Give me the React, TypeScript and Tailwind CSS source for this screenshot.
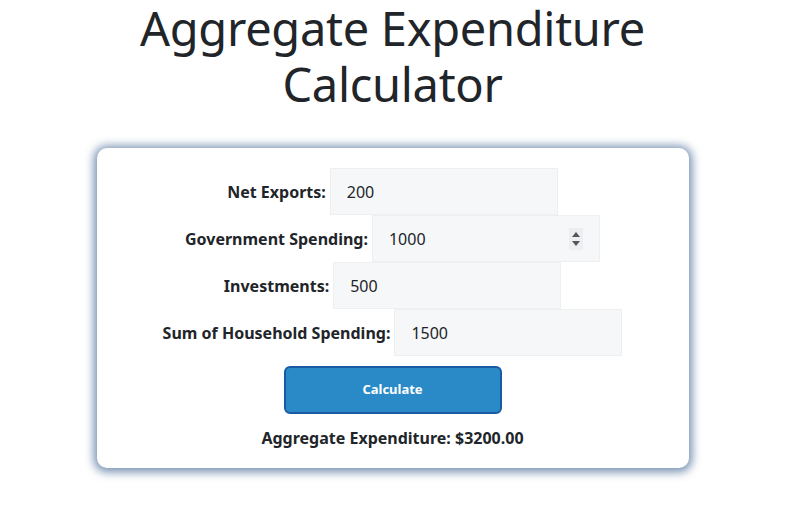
import React from "react";

const fields = [
  { label: "Net Exports:", value: "200" },
  { label: "Government Spending:", value: "1000", spinner: true },
  { label: "Investments:", value: "500" },
  { label: "Sum of Household Spending:", value: "1500" },
];

function Spinner() {
  return (
    <div className="absolute right-[16px] top-1/2 -translate-y-1/2 flex h-[22px] w-[14px] flex-col items-center justify-center gap-[4px] bg-[#eceef1]">
      <svg width="8" height="5" viewBox="0 0 8 5">
        <path d="M0 5 L4 0 L8 5 Z" fill="#555" />
      </svg>
      <svg width="8" height="5" viewBox="0 0 8 5">
        <path d="M0 0 L4 5 L8 0 Z" fill="#555" />
      </svg>
    </div>
  );
}

export default function App() {
  return (
    <div
      className="min-h-[506px] w-[785px] bg-white text-[#212529]"
      style={{ fontFamily: '"Noto Sans", "Open Sans", sans-serif' }}
    >
      <h1 className="text-center text-[47px] font-normal leading-[56px] tracking-[-0.3px] text-[#212529]">
        Aggregate Expenditure
        <br />
        Calculator
      </h1>
      <div className="mt-[36px] flex justify-center">
        <div className="flex w-[592px] flex-col items-center rounded-[10px] bg-white pt-[20px] pb-[18px] shadow-[0_1px_10px_3px_rgba(70,105,150,0.75)]">
          {fields.map((f) => (
            <div key={f.label} className="flex items-center gap-[4px]">
              <label className="text-[16px] font-bold">{f.label}</label>
              <div className="relative flex h-[47px] w-[228px] items-center border border-[#eeeff1] bg-[#f6f7f9] px-[16px] text-[16px]">
                {f.value}
                {f.spinner && <Spinner />}
              </div>
            </div>
          ))}
          <button className="mt-[10px] h-[48px] w-[218px] rounded-[6px] border-2 border-[#1a5aa0] bg-[#2a8ac8] text-[13px] font-bold text-white">
            Calculate
          </button>
          <p className="mt-[12px] text-[16px] font-bold">
            Aggregate Expenditure: $3200.00
          </p>
        </div>
      </div>
    </div>
  );
}
